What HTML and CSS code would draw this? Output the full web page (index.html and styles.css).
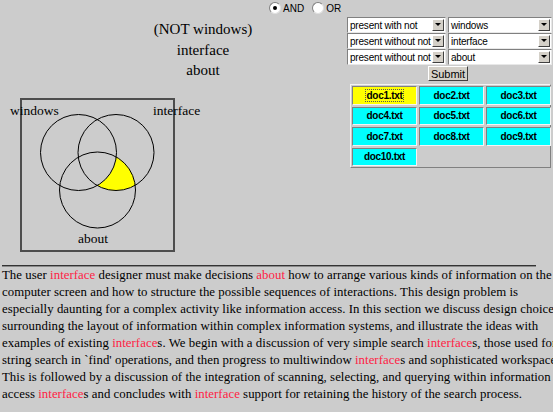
FILE: index.html
```html
<!DOCTYPE html>
<html>
<head>
<meta charset="utf-8">
<link rel="stylesheet" href="styles.css">
</head>
<body>
<div class="page">
  <div class="radios">
    <span class="radio checked"></span><span class="rlabel">AND</span>
    <span class="radio"></span><span class="rlabel">OR</span>
  </div>
  <div class="main">
    <div class="left">
      <div class="title">
        <div>(NOT windows)</div>
        <div>interface</div>
        <div>about</div>
      </div>
      <svg class="venn" width="210" height="160" viewBox="0 0 210 160">
        <rect x="21" y="4" width="153" height="152" fill="none" stroke="#4d4d4d" stroke-width="2"/>
        <path d="M116.24,61.94 A38,38 0 0,1 135.2,90.3 A38,38 0 0,1 97.25,90.55 A38,38 0 0,0 116.24,61.94 Z" fill="#ffff00"/>
        <circle cx="78.5" cy="57.5" r="38" fill="none" stroke="#000" stroke-width="1"/>
        <circle cx="116" cy="57.5" r="38" fill="none" stroke="#000" stroke-width="1"/>
        <circle cx="97.5" cy="95" r="38" fill="none" stroke="#000" stroke-width="1"/>
        <text x="10" y="20" class="vlabel">windows</text>
        <text x="153" y="20" class="vlabel">interface</text>
        <text x="78" y="148" class="vlabel">about</text>
      </svg>
    </div>
    <div class="right">
      <div class="selrow">
        <div class="sel s1"><span>present with not</span><i class="dd"></i></div>
        <div class="sel s2"><span>windows</span><i class="dd"></i></div>
      </div>
      <div class="selrow">
        <div class="sel s1"><span>present without not</span><i class="dd"></i></div>
        <div class="sel s2"><span>interface</span><i class="dd"></i></div>
      </div>
      <div class="selrow">
        <div class="sel s1"><span>present without not</span><i class="dd"></i></div>
        <div class="sel s2"><span>about</span><i class="dd"></i></div>
      </div>
      <div class="submitrow"><span class="submit">Submit</span></div>
      <div class="docs">
        <div class="doc hit"><span class="focus">doc1.txt</span></div>
        <div class="doc">doc2.txt</div>
        <div class="doc">doc3.txt</div>
        <div class="doc">doc4.txt</div>
        <div class="doc">doc5.txt</div>
        <div class="doc">doc6.txt</div>
        <div class="doc">doc7.txt</div>
        <div class="doc">doc8.txt</div>
        <div class="doc">doc9.txt</div>
        <div class="doc">doc10.txt</div>
      </div>
    </div>
  </div>
  <div class="rule"></div>
  <p class="text">The user <em>interface</em> designer must make decisions <em>about</em> how to arrange various kinds of information on the<br>
computer screen and how to structure the possible sequences of interactions. This design problem is<br>
especially daunting for a complex activity like information access. In this section we discuss design choices<br>
surrounding the layout of information within complex information systems, and illustrate the ideas with<br>
examples of existing <em>interface</em>s. We begin with a discussion of very simple search <em>interface</em>s, those used for<br>
string search in `find' operations, and then progress to multiwindow <em>interface</em>s and sophisticated workspaces.<br>
This is followed by a discussion of the integration of scanning, selecting, and querying within information<br>
access <em>interface</em>s and concludes with <em>interface</em> support for retaining the history of the search process.</p>
</div>
</body>
</html>
```
FILE: styles.css
```css
html, body {
  margin: 0;
  padding: 0;
  overflow: hidden;
  background: #cccccc;
}
.page {
  width: 553px;
  height: 412px;
  overflow: hidden;
  background: #cccccc;
  font-family: "Liberation Serif", "Times New Roman", serif;
  color: #000;
}
.radios {
  height: 16px;
  display: flex;
  align-items: center;
  padding-left: 269px;
  font-family: "Liberation Sans", Arial, sans-serif;
  font-size: 10px;
}
.radio {
  width: 10px;
  height: 10px;
  border-radius: 50%;
  background: #fff;
  border: 1px solid #808080;
  border-right-color: #e0e0e0;
  border-bottom-color: #e0e0e0;
  position: relative;
  margin-right: 2px;
}
.radio.checked::after {
  content: "";
  position: absolute;
  left: 3px;
  top: 3px;
  width: 4px;
  height: 4px;
  border-radius: 50%;
  background: #000;
}
.rlabel {
  margin-right: 8px;
}
.main {
  display: flex;
}
.left {
  width: 347px;
}
.title {
  margin-top: 3px;
  width: 406px;
  text-align: center;
  font-size: 15px;
  line-height: 20.5px;
}
.venn {
  display: block;
  margin-top: 14px;
}
.vlabel {
  font-family: "Liberation Serif", "Times New Roman", serif;
  font-size: 13.5px;
}
.right {
  width: 206px;
  padding-top: 1px;
  display: flex;
  flex-direction: column;
}
.selrow {
  display: flex;
  gap: 2px;
  height: 16px;
}
.sel {
  box-sizing: border-box;
  height: 16px;
  background: #fff;
  border: 1px solid #808080;
  border-right-color: #e8e8e8;
  border-bottom-color: #e8e8e8;
  display: flex;
  align-items: center;
  font-family: "Liberation Sans", Arial, sans-serif;
  font-size: 10px;
  letter-spacing: -0.2px;
  overflow: hidden;
}
.sel span {
  flex: 1;
  padding-left: 2px;
  white-space: nowrap;
  overflow: hidden;
}
.s1 { width: 99px; }
.s2 { width: 104px; }
.dd {
  box-sizing: border-box;
  width: 12px;
  height: 12px;
  margin-right: 1px;
  background: #d4d0c8;
  border: 1px solid #fff;
  border-right-color: #404040;
  border-bottom-color: #404040;
  position: relative;
  flex: none;
}
.dd::after {
  content: "";
  position: absolute;
  left: 2px;
  top: 3px;
  border-left: 3px solid transparent;
  border-right: 3px solid transparent;
  border-top: 3px solid #000;
}
.submitrow {
  display: flex;
  justify-content: center;
  padding-right: 4px;
  margin-top: 1px;
}
.submit {
  box-sizing: border-box;
  height: 15px;
  width: 40px;
  display: flex;
  align-items: center;
  justify-content: center;
  background: #d4d0c8;
  border: 1px solid #fff;
  border-right-color: #404040;
  border-bottom-color: #404040;
  font-family: "Liberation Sans", Arial, sans-serif;
  font-size: 11px;
}
.docs {
  margin-top: 3px;
  margin-left: 3px;
  width: 201px;
  box-sizing: border-box;
  display: grid;
  grid-template-columns: 65px 65px 65px;
  gap: 2px;
  padding: 1px;
  border: 1px solid #f4f4f4;
  border-right-color: #808080;
  border-bottom-color: #808080;
}
.doc {
  box-sizing: border-box;
  height: 18.5px;
  background: #00ffff;
  border: 1px solid #808080;
  border-right-color: #f4f4f4;
  border-bottom-color: #f4f4f4;
  display: flex;
  align-items: center;
  justify-content: center;
  font-family: "Liberation Sans", Arial, sans-serif;
  font-size: 10px;
  letter-spacing: -0.3px;
  font-weight: bold;
}
.doc.hit {
  background: #ffff00;
}
.focus {
  outline: 1px dotted #555;
  outline-offset: 0;
  padding: 0 1px;
}
.rule {
  margin: 10px 0 0 2px;
  width: 534px;
  height: 1px;
  background: #333;
  border-bottom: 1px solid #8a8a8a;
}
.text {
  margin: 0 0 0 2px;
  white-space: nowrap;
  font-size: 12.8px;
  line-height: 17px;
  letter-spacing: 0.05px;
}
.text em {
  font-style: normal;
  color: #ff2244;
}
```
